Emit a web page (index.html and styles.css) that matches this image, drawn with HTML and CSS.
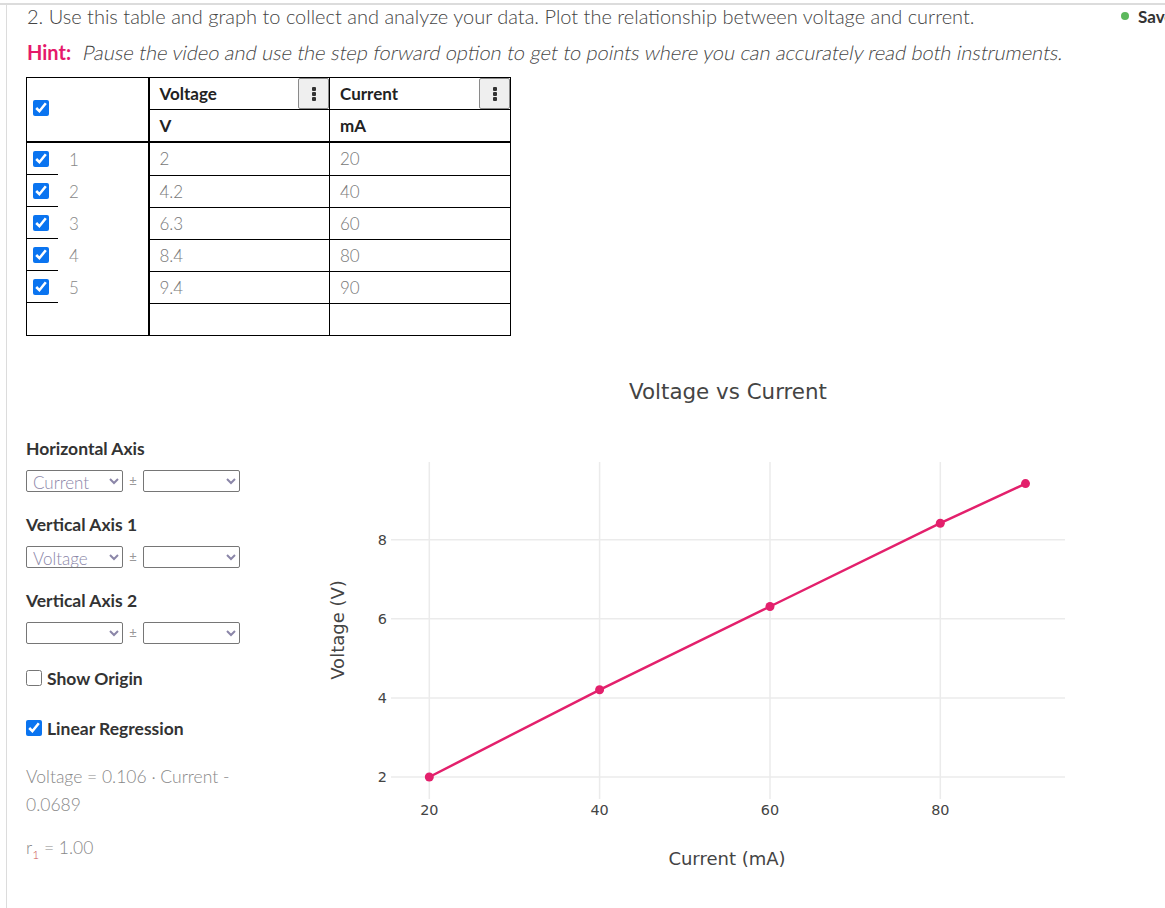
FILE: index.html
```html
<!DOCTYPE html>
<html lang="en">
<head>
<meta charset="utf-8">
<title>Voltage vs Current</title>
<link rel="stylesheet" href="styles.css">
</head>
<body>
<div class="topline"></div>
<div class="main">
  <div class="q-header">
    <p class="question">2. Use this table and graph to collect and analyze your data. Plot the relationship between voltage and current.</p>
    <div class="status"><span class="dot"></span>Saved</div>
  </div>
  <p class="hint"><b>Hint:</b> <span class="slant">Pause the video and use the step forward option to get to points where you can accurately read both instruments.</span></p>

  <table class="data">
    <colgroup><col class="c-idx"><col class="c-val"><col class="c-val"></colgroup>
    <thead>
      <tr>
        <th rowspan="2" class="idx-head"><input type="checkbox" checked></th>
        <th class="name"><div class="name-wrap"><span>Voltage</span><button class="kebab" aria-label="menu"><svg width="4" height="14" viewBox="0 0 4 14"><rect x="0" y="0" width="4" height="4" rx="1"/><rect x="0" y="5" width="4" height="4" rx="1"/><rect x="0" y="10" width="4" height="4" rx="1"/></svg></button></div></th>
        <th class="name"><div class="name-wrap"><span>Current</span><button class="kebab" aria-label="menu"><svg width="4" height="14" viewBox="0 0 4 14"><rect x="0" y="0" width="4" height="4" rx="1"/><rect x="0" y="5" width="4" height="4" rx="1"/><rect x="0" y="10" width="4" height="4" rx="1"/></svg></button></div></th>
      </tr>
      <tr class="units">
        <th>V</th>
        <th>mA</th>
      </tr>
    </thead>
    <tbody>
      <tr><td class="idx"><div class="idx-wrap"><span class="cb"><input type="checkbox" checked></span><span class="num">1</span></div></td><td>2</td><td>20</td></tr>
      <tr><td class="idx"><div class="idx-wrap"><span class="cb"><input type="checkbox" checked></span><span class="num">2</span></div></td><td>4.2</td><td>40</td></tr>
      <tr><td class="idx"><div class="idx-wrap"><span class="cb"><input type="checkbox" checked></span><span class="num">3</span></div></td><td>6.3</td><td>60</td></tr>
      <tr><td class="idx"><div class="idx-wrap"><span class="cb"><input type="checkbox" checked></span><span class="num">4</span></div></td><td>8.4</td><td>80</td></tr>
      <tr><td class="idx"><div class="idx-wrap"><span class="cb"><input type="checkbox" checked></span><span class="num">5</span></div></td><td>9.4</td><td>90</td></tr>
      <tr class="empty"><td class="idx"></td><td></td><td></td></tr>
    </tbody>
  </table>

  <div class="lower">
    <div class="controls">
      <h4 class="axis-label">Horizontal Axis</h4>
      <div class="axis-row">
        <select class="sel"><option>Current</option></select>
        <span class="pm">±</span>
        <select class="sel"><option></option></select>
      </div>
      <h4 class="axis-label">Vertical Axis 1</h4>
      <div class="axis-row">
        <select class="sel"><option>Voltage</option></select>
        <span class="pm">±</span>
        <select class="sel"><option></option></select>
      </div>
      <h4 class="axis-label">Vertical Axis 2</h4>
      <div class="axis-row">
        <select class="sel"><option></option></select>
        <span class="pm">±</span>
        <select class="sel"><option></option></select>
      </div>
      <label class="opt opt-origin"><input type="checkbox">Show Origin</label>
      <label class="opt opt-reg"><input type="checkbox" checked>Linear Regression</label>
      <p class="equation">Voltage = 0.106 · Current - 0.0689</p>
      <p class="rval">r<sub>1</sub> = 1.00</p>
    </div>

    <svg class="chart" width="865" height="563" viewBox="0 0 865 563">
      <text class="title" x="427" y="53" text-anchor="middle">Voltage vs Current</text>
      <g class="grid">
        <line x1="128.3" y1="116" x2="128.3" y2="453"/>
        <line x1="298.6" y1="116" x2="298.6" y2="453"/>
        <line x1="469" y1="116" x2="469" y2="453"/>
        <line x1="639.3" y1="116" x2="639.3" y2="453"/>
        <line x1="90" y1="193.7" x2="764" y2="193.7"/>
        <line x1="90" y1="272.7" x2="764" y2="272.7"/>
        <line x1="90" y1="352" x2="764" y2="352"/>
        <line x1="90" y1="431" x2="764" y2="431"/>
      </g>
      <g class="ticks">
        <text x="86" y="198.7" text-anchor="end">8</text>
        <text x="86" y="277.7" text-anchor="end">6</text>
        <text x="86" y="357" text-anchor="end">4</text>
        <text x="86" y="436" text-anchor="end">2</text>
        <text x="128.3" y="469" text-anchor="middle">20</text>
        <text x="298.6" y="469" text-anchor="middle">40</text>
        <text x="469" y="469" text-anchor="middle">60</text>
        <text x="639.3" y="469" text-anchor="middle">80</text>
      </g>
      <text class="axis-title" x="426" y="519" text-anchor="middle">Current (mA)</text>
      <text class="axis-title" transform="translate(43 284) rotate(-90)" text-anchor="middle">Voltage (V)</text>
      <polyline class="series" points="128.3,431 298.6,343.8 469,260.5 639.3,177.2 724.5,137.6"/>
      <g class="markers">
        <circle cx="128.3" cy="431" r="4.5"/>
        <circle cx="298.6" cy="343.8" r="4.5"/>
        <circle cx="469" cy="260.5" r="4.5"/>
        <circle cx="639.3" cy="177.2" r="4.5"/>
        <circle cx="724.5" cy="137.6" r="4.5"/>
      </g>
    </svg>
  </div>
</div>
</body>
</html>
```

FILE: styles.css
```css
html, body {
  margin: 0;
  padding: 0;
  background: #fff;
  overflow: hidden;
}
body {
  font-family: Lato, "Liberation Sans", sans-serif;
  color: #333;
  width: 1165px;
  height: 908px;
}
.topline {
  height: 3px;
  border-bottom: 2px solid #dcdcdc;
}
.main {
  margin-left: 6px;
  border-left: 1px solid #dcdcdc;
  padding-left: 19px;
  height: 903px;
}
.q-header {
  display: flex;
  align-items: center;
  justify-content: space-between;
  height: 22px;
}
.question {
  margin: 0 0 0 1px;
  font-size: 20px;
  font-weight: 300;
  color: #444;
  white-space: nowrap;
}
.status {
  display: flex;
  align-items: center;
  font-weight: 700;
  font-size: 17px;
  color: #333;
  white-space: nowrap;
  width: 44px;
  overflow: visible;
}
.dot {
  width: 8px;
  height: 8px;
  border-radius: 50%;
  background: #5cb85c;
  margin-right: 9px;
  flex: none;
}
.hint {
  margin: 13px 0 0 1px;
  font-size: 20px;
  font-weight: 300;
  color: #444;
  white-space: nowrap;
}
.hint b {
  color: #e5186b;
  font-weight: 700;
  margin-right: 4px;
}
.slant {
  display: inline-block;
  transform: skewX(-11deg);
  transform-origin: 0 100%;
}
.data {
  margin-top: 13px;
  border-collapse: collapse;
  font-size: 17px;
}
.c-idx { width: 122px; }
.c-val { width: 181px; }
.data th, .data td {
  border: 1px solid #000;
  height: 31px;
  padding: 0 0 0 10px;
  text-align: left;
  vertical-align: middle;
}
.data th {
  font-weight: 700;
  color: #222;
}
.data td {
  font-weight: 300;
  color: #777;
}
.data .idx-head {
  border-right: 2px solid #000;
  border-bottom: 2px solid #000;
  padding-left: 6px;
}
.data .units th {
  border-bottom: 2px solid #000;
}
.data th.name {
  padding: 0 0 0 10px;
}
.name-wrap {
  display: flex;
  align-items: stretch;
  justify-content: space-between;
  height: 31px;
}
.name-wrap span {
  align-self: center;
}
.kebab {
  width: 31px;
  height: 31px;
  margin: 0;
  padding: 0;
  background: #efefef;
  border: 1px solid #8a8a8a;
  border-radius: 2px;
  display: flex;
  align-items: center;
  justify-content: center;
}
.kebab svg { fill: #333; }
.data td.idx {
  border-right: 2px solid #000;
  border-top: none;
  border-bottom: none;
  padding: 0;
}
.data tr.empty td.idx {
  border-bottom: 1px solid #000;
}
.idx-wrap {
  display: flex;
  align-items: stretch;
  height: 32px;
}
.cb {
  width: 31px;
  border-bottom: 1px solid #000;
  display: flex;
  align-items: center;
  padding-left: 6px;
  box-sizing: border-box;
}
.num {
  align-self: center;
  margin-left: 11px;
  color: #888;
  font-weight: 300;
}
input[type="checkbox"] {
  width: 16px;
  height: 16px;
  margin: 0;
  accent-color: #0a74f0;
}
.lower {
  display: flex;
  align-items: flex-start;
  margin-top: 10px;
}
.controls {
  width: 275px;
  padding-top: 92px;
  flex: none;
}
.axis-label {
  margin: 0;
  font-size: 17.5px;
  font-weight: 700;
  color: #333;
  line-height: 22px;
}
.axis-row {
  display: flex;
  align-items: center;
  margin: 10px 0 22px;
}
.sel {
  width: 97px;
  height: 22px;
  font-family: Lato, sans-serif;
  font-size: 17px;
  font-weight: 300;
  color: #8b86a8;
  border: 1px solid #767676;
  border-radius: 2px;
  background: #fff;
  padding: 0 0 0 2px;
}
.pm {
  font-size: 13px;
  color: #999;
  width: 20px;
  text-align: center;
}
.opt {
  display: flex;
  align-items: center;
  font-size: 17.5px;
  font-weight: 700;
  color: #333;
  gap: 5px;
}
.opt-origin { margin-top: 24px; }
.opt-reg { margin-top: 29px; }
.equation {
  margin: 24px 0 0;
  font-size: 17.5px;
  font-weight: 300;
  color: #888;
  line-height: 28px;
  width: 215px;
}
.rval {
  margin: 18px 0 0;
  font-size: 17.5px;
  font-weight: 300;
  color: #888;
}
.rval sub {
  font-size: 12px;
  color: #c55;
}
.chart {
  flex: none;
  display: block;
  margin-left: 0;
}
.chart text {
  font-family: "DejaVu Sans", Verdana, sans-serif;
  fill: #444;
}
.chart .title { font-size: 21.4px; }
.chart .ticks text { font-size: 14.4px; }
.chart .axis-title { font-size: 18px; }
.grid line {
  stroke: #ebebeb;
  stroke-width: 1.5;
}
.series {
  fill: none;
  stroke: #e3206c;
  stroke-width: 2.5;
}
.markers circle { fill: #e3206c; }
```
